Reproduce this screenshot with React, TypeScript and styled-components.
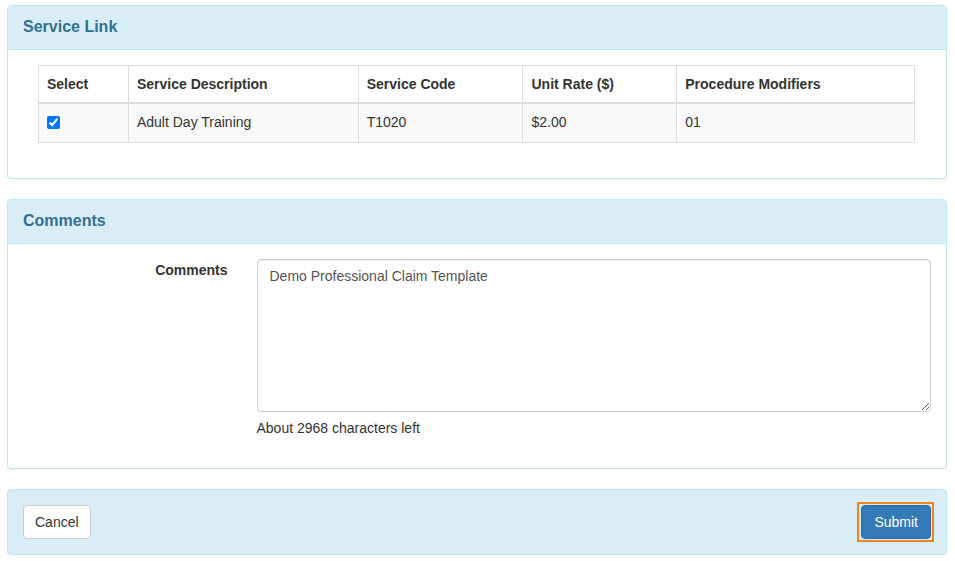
import React from "react";
import styled, { createGlobalStyle } from "styled-components";

const GlobalStyle = createGlobalStyle`
  * { box-sizing: border-box; }
  body {
    margin: 0;
    font-family: "Liberation Sans", Arial, Helvetica, sans-serif;
    font-size: 14px;
    line-height: 1.42857;
    color: #333;
    background: #fff;
  }
`;

const Page = styled.div`
  padding: 5px 8px 0 7px;
  display: flex;
  flex-direction: column;
  gap: 20px;
`;

const Panel = styled.section<{ $filled?: boolean }>`
  border: 1px solid #bce8f1;
  border-radius: 4px;
  background: ${(p) => (p.$filled ? "#d9edf7" : "#fff")};
  box-shadow: 0 1px 1px rgba(0, 0, 0, 0.05);
`;

const PanelHeading = styled.div`
  background: #d9edf7;
  border-bottom: 1px solid #bce8f1;
  border-radius: 3px 3px 0 0;
  padding: 9px 15px 10px;
  height: 44px;
`;

const PanelTitle = styled.h3`
  margin: 0;
  font-size: 16px;
  line-height: 24px;
  font-weight: bold;
  color: #31708f;
`;

const PanelBody = styled.div<{ $pad?: string }>`
  padding: ${(p) => p.$pad || "15px"};
`;

const Table = styled.table`
  width: 877px;
  border-collapse: collapse;
  border-spacing: 0;
  margin-bottom: 20px;
  border: 1px solid #ddd;
`;

const Th = styled.th<{ $w: number }>`
  width: ${(p) => p.$w}px;
  text-align: left;
  padding: 8px;
  line-height: 20px;
  border: 1px solid #ddd;
  border-bottom: 2px solid #ddd;
  font-weight: bold;
  vertical-align: bottom;
`;

const Tr = styled.tr<{ $striped?: boolean }>`
  background: ${(p) => (p.$striped ? "#f9f9f9" : "#fff")};
`;

const Td = styled.td`
  padding: 8px 8px 10px;
  line-height: 20px;
  border: 1px solid #ddd;
  vertical-align: top;
`;

const Check = styled.input`
  margin: 4px 0 0;
  width: 13px;
  height: 13px;
  display: block;
`;

const FormRow = styled.div`
  display: grid;
  grid-template-columns: 3fr 9fr;
  margin: 0 -15px 15px;
`;

const Label = styled.label`
  padding: 1px 15px 0;
  text-align: right;
  font-weight: bold;
  line-height: 20px;
`;

const Field = styled.div`
  padding: 0 15px 0 14px;
`;

const TextArea = styled.textarea`
  display: block;
  width: 100%;
  height: 153px;
  padding: 6px 12px;
  font-family: inherit;
  font-size: 14px;
  line-height: 20px;
  color: #555;
  background: #fff;
  border: 1px solid #ccc;
  border-radius: 4px;
  box-shadow: inset 0 1px 1px rgba(0, 0, 0, 0.075);
  resize: vertical;
`;

const HelpText = styled.div`
  margin-top: 6px;
  line-height: 20px;
  color: #333;
`;

const Actions = styled.div`
  display: flex;
  justify-content: space-between;
  align-items: center;
`;

const Button = styled.button<{ $primary?: boolean; $focused?: boolean }>`
  position: relative;
  font-family: inherit;
  font-size: 14px;
  line-height: 20px;
  padding: 6px ${(p) => (p.$primary ? "12px" : "11px")};
  border-radius: 4px;
  cursor: pointer;
  border: 1px solid ${(p) => (p.$primary ? "#2e6da4" : "#ccc")};
  background: ${(p) => (p.$primary ? "#337ab7" : "#fff")};
  color: ${(p) => (p.$primary ? "#fff" : "#333")};
  outline: none;

  &::after {
    content: "";
    display: ${(p) => (p.$focused ? "block" : "none")};
    position: absolute;
    top: -4px;
    bottom: -4px;
    left: -5px;
    right: -4px;
    border: 2px solid #f5821f;
    pointer-events: none;
  }
`;

const columns = [
  { label: "Select", w: 90 },
  { label: "Service Description", w: 230 },
  { label: "Service Code", w: 165 },
  { label: "Unit Rate ($)", w: 154 },
  { label: "Procedure Modifiers", w: 238 },
];

export default function App() {
  return (
    <>
      <GlobalStyle />
      <Page>
        <Panel>
          <PanelHeading>
            <PanelTitle>Service Link</PanelTitle>
          </PanelHeading>
          <PanelBody $pad="15px 30px">
            <Table>
              <thead>
                <tr>
                  {columns.map((c) => (
                    <Th key={c.label} $w={c.w}>
                      {c.label}
                    </Th>
                  ))}
                </tr>
              </thead>
              <tbody>
                <Tr $striped>
                  <Td>
                    <Check type="checkbox" defaultChecked />
                  </Td>
                  <Td>Adult Day Training</Td>
                  <Td>T1020</Td>
                  <Td>$2.00</Td>
                  <Td>01</Td>
                </Tr>
              </tbody>
            </Table>
          </PanelBody>
        </Panel>

        <Panel>
          <PanelHeading>
            <PanelTitle>Comments</PanelTitle>
          </PanelHeading>
          <PanelBody>
            <FormRow>
              <Label htmlFor="comments">Comments</Label>
              <Field>
                <TextArea
                  id="comments"
                  defaultValue="Demo Professional Claim Template"
                />
                <HelpText>About 2968 characters left</HelpText>
              </Field>
            </FormRow>
          </PanelBody>
        </Panel>

        <Panel $filled>
          <PanelBody>
            <Actions>
              <Button type="button">Cancel</Button>
              <Button type="button" $primary $focused>
                Submit
              </Button>
            </Actions>
          </PanelBody>
        </Panel>
      </Page>
    </>
  );
}
